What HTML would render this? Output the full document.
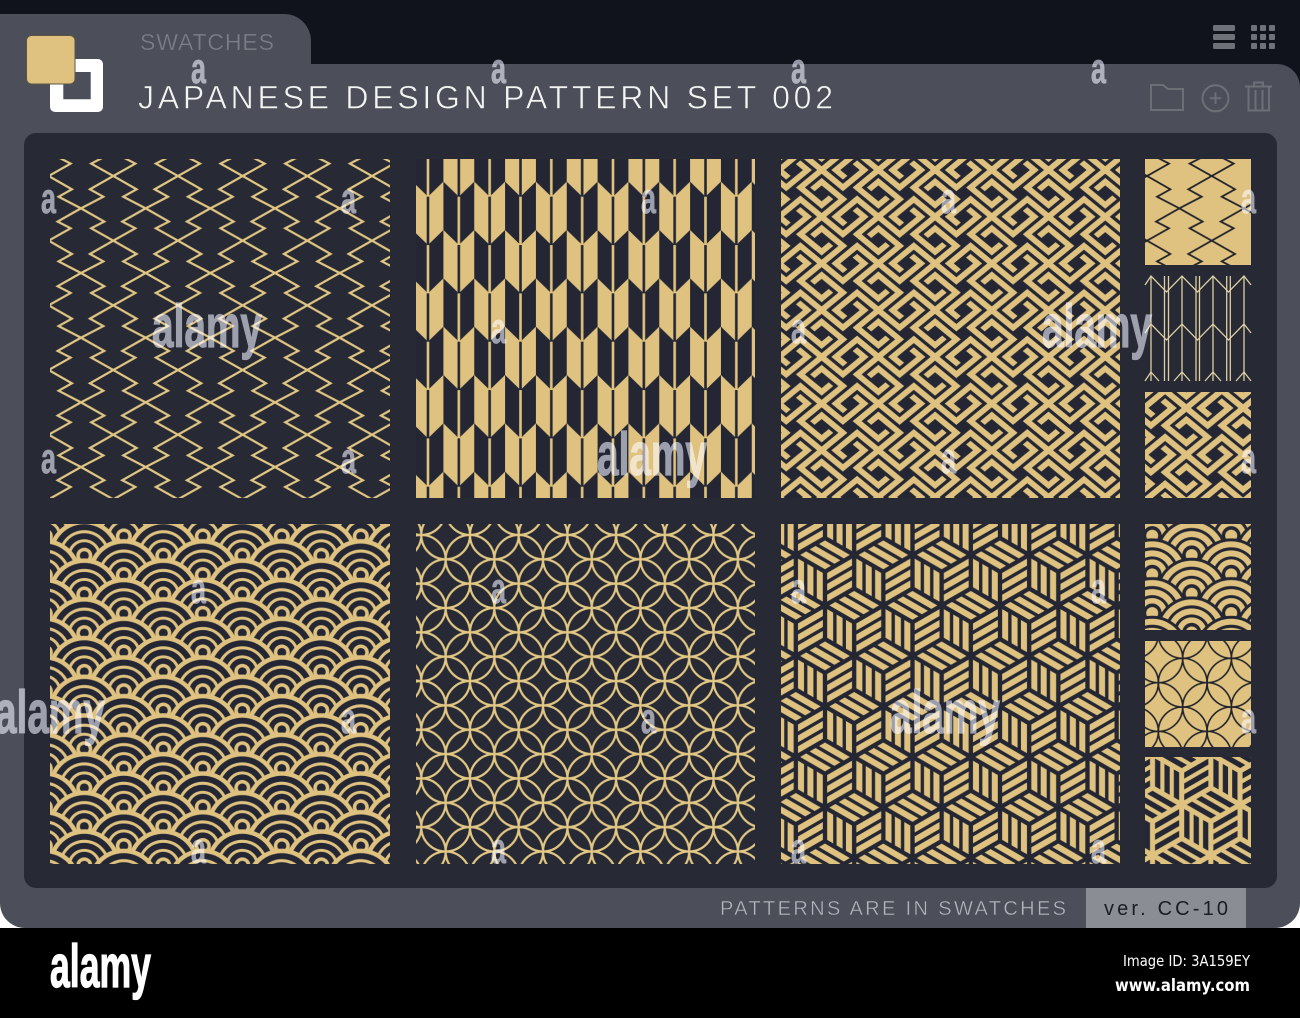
<!DOCTYPE html>
<html><head><meta charset="utf-8"><title>Japanese Design Pattern Set 002</title>
<style>
html,body{margin:0;padding:0;background:#000;width:1300px;height:1018px;overflow:hidden}
svg{display:block}
text{font-family:"Liberation Sans",sans-serif}
.wm{fill:#8c8e98;stroke:#8c8e98;stroke-width:.7;mix-blend-mode:screen;font-weight:bold}
</style></head><body>
<svg xmlns="http://www.w3.org/2000/svg" width="1300" height="1018" viewBox="0 0 1300 1018">
<defs>
<path id="zz" fill="none" stroke-linejoin="miter" d="M0 0L23.3 13.3L10 20.7L32.33 32.33M64.67 0L41.3 13.3L54.67 20.7L32.33 32.33L55.6 45.6L42.6 52.3L64.67 64.67M32.33 32.33L9 45.6L22 52.3L0 64.67"/>
<pattern id="p1" patternUnits="userSpaceOnUse" width="64.67" height="64.67" patternTransform="translate(113.3 176)">
<use href="#zz" stroke="#e2c784" stroke-width="2.2"/></pattern>
<pattern id="s1" patternUnits="userSpaceOnUse" width="64.67" height="64.67" patternTransform="translate(1211.7 176)">
<rect width="65" height="65" fill="#dfc27f"/><use href="#zz" stroke="#20222b" stroke-width="1.8"/></pattern>

<pattern id="p2" patternUnits="userSpaceOnUse" width="61.67" height="96.67" patternTransform="translate(412.58 181.67)">
<rect width="62" height="97" fill="#242733"/>
<g fill="#dfc27f">
<polygon points="0,0 15.42,15 30.83,0 30.83,48.33 15.42,63.33 0,48.33"/>
<polygon points="30.83,48.33 46.25,63.33 61.67,48.33 61.67,96.67 46.25,111.67 30.83,96.67"/>
<polygon points="30.83,-48.33 46.25,-33.33 61.67,-48.33 61.67,0 46.25,15 30.83,0"/>
<rect x="14.1" y="63.33" width="2.6" height="33.4"/><rect x="14.1" y="0" width="2.6" height="15"/>
<rect x="44.95" y="15" width="2.6" height="48.33"/>
</g>
<g fill="#242733">
<rect x="14.1" y="15" width="2.6" height="48.33"/>
<rect x="44.95" y="63.33" width="2.6" height="33.4"/><rect x="44.95" y="0" width="2.6" height="15"/>
</g>
</pattern>

<path id="arm" fill="none" stroke-linecap="square" stroke-linejoin="miter" d="M0 0H3V3H2"/>
<g id="sw"><use href="#arm"/><use href="#arm" transform="rotate(90)"/><use href="#arm" transform="rotate(180)"/><use href="#arm" transform="rotate(270)"/></g>
<g id="swt" transform="matrix(7.09 5.84 7.09 -5.84 0 0)">
<use href="#sw" x="0" y="0"/><use href="#sw" x="4" y="4"/><use href="#sw" x="4" y="-4"/><use href="#sw" x="8" y="0"/>
</g>
<pattern id="p3" patternUnits="userSpaceOnUse" width="56.72" height="46.72" patternTransform="translate(821.65 170)">
<rect width="57" height="47" fill="#242733"/>
<use href="#swt" stroke="#dfc27f" stroke-width=".63"/></pattern>
<pattern id="s3" patternUnits="userSpaceOnUse" width="56.72" height="46.72" patternTransform="translate(1129.65 408)">
<rect width="57" height="47" fill="#242733"/>
<use href="#swt" stroke="#dfc27f" stroke-width=".65"/></pattern>

<g id="fanA"><circle r="36" fill="#dfc27f"/><circle r="31.5" fill="#242733"/><circle r="25.5" fill="#dfc27f"/><circle r="22.5" fill="#242733"/><circle r="16.5" fill="#dfc27f"/><circle r="13.5" fill="#242733"/><circle r="8" fill="#dfc27f"/><circle r="4.5" fill="#242733"/></g>
<g id="fanB"><circle r="36" fill="#242733"/><circle r="33" fill="#dfc27f"/><circle r="27" fill="#242733"/><circle r="24" fill="#dfc27f"/><circle r="18" fill="#242733"/><circle r="15" fill="#dfc27f"/><circle r="9.5" fill="#242733"/><circle r="6" fill="#dfc27f"/></g>
<pattern id="p4" patternUnits="userSpaceOnUse" width="79" height="38.7" patternTransform="translate(5.3 517)">
<rect width="79" height="39" fill="#dfc27f"/>
<use href="#fanA" x="0" y="-38.7"/><use href="#fanA" x="79" y="-38.7"/>
<use href="#fanA" x="39.5" y="-19.35"/>
<use href="#fanA" x="0" y="0"/><use href="#fanA" x="79" y="0"/>
<use href="#fanA" x="39.5" y="19.35"/>
<use href="#fanA" x="0" y="38.7"/><use href="#fanA" x="79" y="38.7"/>
<use href="#fanA" x="39.5" y="58.05"/>
</pattern>
<pattern id="s4" patternUnits="userSpaceOnUse" width="79" height="38.7" patternTransform="translate(1191.7 555)">
<rect width="79" height="39" fill="#242733"/>
<use href="#fanB" x="0" y="-38.7"/><use href="#fanB" x="79" y="-38.7"/>
<use href="#fanB" x="39.5" y="-19.35"/>
<use href="#fanB" x="0" y="0"/><use href="#fanB" x="79" y="0"/>
<use href="#fanB" x="39.5" y="19.35"/>
<use href="#fanB" x="0" y="38.7"/><use href="#fanB" x="79" y="38.7"/>
<use href="#fanB" x="39.5" y="58.05"/>
</pattern>

<g id="shp" fill="none"><circle cx="0" cy="0" r="24.35"/><circle cx="48.7" cy="0" r="24.35"/><circle cx="0" cy="48.7" r="24.35"/><circle cx="48.7" cy="48.7" r="24.35"/><circle cx="24.35" cy="24.35" r="24.35"/></g>
<pattern id="p5" patternUnits="userSpaceOnUse" width="48.7" height="48.7" patternTransform="translate(470 559.3)">
<use href="#shp" stroke="#e2c784" stroke-width="2.2"/></pattern>
<pattern id="s5" patternUnits="userSpaceOnUse" width="48.7" height="48.7" patternTransform="translate(1182.7 682.7)">
<rect width="49" height="49" fill="#dfc27f"/><use href="#shp" stroke="#20222b" stroke-width="1.6"/></pattern>

<g id="rh"><polygon points="-27,-13.08 -21,-9.62 -21,19.06 -27,15.6"/><polygon points="-17.6,-7.66 -11.6,-4.19 -11.6,24.49 -17.6,21.02"/><polygon points="-8.2,-2.23 -2.2,1.23 -2.2,29.91 -8.2,26.45"/></g>
<g id="cube"><use href="#rh"/><use href="#rh" transform="rotate(120)"/><use href="#rh" transform="rotate(240)"/></g>
<g id="cubes"><use href="#cube" x="0" y="0"/><use href="#cube" x="58.33" y="0"/><use href="#cube" x="29.17" y="50.52"/><use href="#cube" x="0" y="101.04"/><use href="#cube" x="58.33" y="101.04"/></g>
<pattern id="p6" patternUnits="userSpaceOnUse" width="58.33" height="101.04" patternTransform="translate(825 571.7)">
<rect width="59" height="102" fill="#242733"/><use href="#cubes" fill="#dfc27f"/></pattern>
<pattern id="s6" patternUnits="userSpaceOnUse" width="58.33" height="101.04" patternTransform="translate(1181.7 771)">
<rect width="59" height="102" fill="#dfc27f"/><use href="#cubes" fill="#242733" stroke="#dfc27f" stroke-width=".7"/></pattern>
</defs>

<rect width="1300" height="1018" fill="#000"/>
<rect width="1300" height="100" fill="#10131c"/>
<rect y="880" width="1300" height="48" fill="#fff"/>
<path d="M0 14H284A27 27 0 0 1 311 41V64H1277A23 23 0 0 1 1300 87V903A25 25 0 0 1 1275 928H25A25 25 0 0 1 0 903Z" fill="#4c4f59"/>
<rect x="24" y="133" width="1253" height="755" rx="12" fill="#272a34"/>

<!-- logo -->
<path fill-rule="evenodd" d="M55 59H98A5 5 0 0 1 103 64V107A5 5 0 0 1 98 112H55A5 5 0 0 1 50 107V64A5 5 0 0 1 55 59ZM63.3 72V99.3H90.7V72Z" fill="#fff"/>
<rect x="26.5" y="35.5" width="48.5" height="48.5" rx="5" fill="#dfc27f" stroke="#5b5445" stroke-width="1"/>

<text x="140" y="50" font-size="23" fill="#7b7e87" textLength="134" lengthAdjust="spacing" stroke="#4c4f59" stroke-width=".35">SWATCHES</text>
<text x="138" y="108.5" font-size="32" fill="#f4f4f4" textLength="695" lengthAdjust="spacing" stroke="#4c4f59" stroke-width=".6">JAPANESE DESIGN PATTERN SET 002</text>

<!-- top-right icons -->
<g fill="#6f7179">
<rect x="1213" y="25" width="22" height="6" rx="1.5"/><rect x="1213" y="34" width="22" height="6" rx="1.5"/><rect x="1213" y="43" width="22" height="6" rx="1.5"/>
<rect x="1251" y="25" width="6" height="6" rx="1"/><rect x="1260" y="25" width="6" height="6" rx="1"/><rect x="1269" y="25" width="6" height="6" rx="1"/>
<rect x="1251" y="34" width="6" height="6" rx="1"/><rect x="1260" y="34" width="6" height="6" rx="1"/><rect x="1269" y="34" width="6" height="6" rx="1"/>
<rect x="1251" y="43" width="6" height="6" rx="1"/><rect x="1260" y="43" width="6" height="6" rx="1"/><rect x="1269" y="43" width="6" height="6" rx="1"/>
</g>
<g fill="none" stroke="#6d6f77" stroke-width="2">
<path d="M1151 85H1163L1168 89H1183V110H1151Z"/>
<circle cx="1215.5" cy="98.3" r="13"/><path d="M1215.5 92.5V104M1209.8 98.3H1221.2"/>
<path d="M1245 86.5H1272M1254 86V82.5H1263V86M1248.5 87V110.5H1269V87M1255.5 90V110M1262.5 90V110"/>
</g>

<!-- patterns -->
<rect x="50" y="159" width="340" height="339" fill="url(#p1)"/>
<rect x="416" y="159" width="339" height="339" fill="url(#p2)"/>
<rect x="781" y="159" width="339" height="339" fill="url(#p3)"/>
<rect x="50" y="524" width="340" height="340" fill="url(#p4)"/>
<rect x="416" y="524" width="339" height="340" fill="url(#p5)"/>
<rect x="781" y="524" width="339" height="340" fill="url(#p6)"/>
<rect x="1145" y="159" width="106" height="106" fill="url(#s1)"/>
<rect x="1145" y="392" width="106" height="106" fill="url(#s3)"/>
<rect x="1145" y="524" width="106" height="106" fill="url(#s4)"/>
<rect x="1145" y="641" width="106" height="106" fill="url(#s5)"/>
<rect x="1145" y="757" width="106" height="107" fill="url(#s6)"/>

<!-- arrow outline swatch -->
<g fill="none" stroke="#dccfa4" stroke-width="1.3">
<path d="M1145 285L1151 276L1166.5 292L1182 276L1197.5 292L1213 276L1228.5 292L1244 276L1251 285"/>
<path d="M1145 333L1151 324L1166.5 340L1182 324L1197.5 340L1213 324L1228.5 340L1244 324L1251 333"/>
<path d="M1145 381L1151 372L1159 381M1174 381L1182 372L1190 381M1205 381L1213 372L1221 381M1236 381L1244 372L1251 381"/>
<path d="M1151 276V381M1182 276V381M1213 276V381M1244 276V381M1164.5 276V381M1168.5 276V381M1196 276V381M1199.5 276V381M1226.7 276V381M1230.3 276V381"/>
</g>

<!-- bottom bar -->
<rect x="1086" y="888" width="160" height="40" fill="#8b8d94"/>
<text x="720" y="915" font-size="20" fill="#b4b6bc" textLength="346" lengthAdjust="spacing" stroke="#4c4f59" stroke-width=".4">PATTERNS ARE IN SWATCHES</text>
<text x="1104" y="915" font-size="20" fill="#1b1d24" textLength="124" lengthAdjust="spacing">ver. CC-10</text>

<!-- watermarks -->
<g font-size="43">
<text class="wm" x="191" y="83" textLength="15" lengthAdjust="spacingAndGlyphs">a</text>
<text class="wm" x="491" y="83" textLength="15" lengthAdjust="spacingAndGlyphs">a</text>
<text class="wm" x="791" y="83" textLength="15" lengthAdjust="spacingAndGlyphs">a</text>
<text class="wm" x="1091" y="83" textLength="15" lengthAdjust="spacingAndGlyphs">a</text>
<text class="wm" x="41" y="213" textLength="15" lengthAdjust="spacingAndGlyphs">a</text>
<text class="wm" x="341" y="213" textLength="15" lengthAdjust="spacingAndGlyphs">a</text>
<text class="wm" x="641" y="213" textLength="15" lengthAdjust="spacingAndGlyphs">a</text>
<text class="wm" x="941" y="213" textLength="15" lengthAdjust="spacingAndGlyphs">a</text>
<text class="wm" x="1241" y="213" textLength="15" lengthAdjust="spacingAndGlyphs">a</text>
<text class="wm" x="491" y="343" textLength="15" lengthAdjust="spacingAndGlyphs">a</text>
<text class="wm" x="791" y="343" textLength="15" lengthAdjust="spacingAndGlyphs">a</text>
<text class="wm" x="41" y="473" textLength="15" lengthAdjust="spacingAndGlyphs">a</text>
<text class="wm" x="341" y="473" textLength="15" lengthAdjust="spacingAndGlyphs">a</text>
<text class="wm" x="941" y="473" textLength="15" lengthAdjust="spacingAndGlyphs">a</text>
<text class="wm" x="1241" y="473" textLength="15" lengthAdjust="spacingAndGlyphs">a</text>
<text class="wm" x="191" y="603" textLength="15" lengthAdjust="spacingAndGlyphs">a</text>
<text class="wm" x="491" y="603" textLength="15" lengthAdjust="spacingAndGlyphs">a</text>
<text class="wm" x="791" y="603" textLength="15" lengthAdjust="spacingAndGlyphs">a</text>
<text class="wm" x="1091" y="603" textLength="15" lengthAdjust="spacingAndGlyphs">a</text>
<text class="wm" x="341" y="733" textLength="15" lengthAdjust="spacingAndGlyphs">a</text>
<text class="wm" x="641" y="733" textLength="15" lengthAdjust="spacingAndGlyphs">a</text>
<text class="wm" x="1241" y="733" textLength="15" lengthAdjust="spacingAndGlyphs">a</text>
<text class="wm" x="191" y="863" textLength="15" lengthAdjust="spacingAndGlyphs">a</text>
<text class="wm" x="491" y="863" textLength="15" lengthAdjust="spacingAndGlyphs">a</text>
<text class="wm" x="791" y="863" textLength="15" lengthAdjust="spacingAndGlyphs">a</text>
<text class="wm" x="1091" y="863" textLength="15" lengthAdjust="spacingAndGlyphs">a</text>
</g>
<g font-size="60">
<text class="wm" style="stroke-width:1.2" x="152" y="347" textLength="110" lengthAdjust="spacingAndGlyphs">alamy</text>
<text class="wm" style="stroke-width:1.2" x="1042" y="347" textLength="110" lengthAdjust="spacingAndGlyphs">alamy</text>
<text class="wm" style="stroke-width:1.2" x="597" y="475" textLength="110" lengthAdjust="spacingAndGlyphs">alamy</text>
<text class="wm" style="stroke-width:1.2" x="-5" y="733" textLength="110" lengthAdjust="spacingAndGlyphs">alamy</text>
<text class="wm" style="stroke-width:1.2" x="890" y="733" textLength="110" lengthAdjust="spacingAndGlyphs">alamy</text>
</g>

<!-- footer -->
<text x="50" y="987" font-size="60" font-weight="bold" fill="#fff" stroke="#fff" stroke-width="1.3" textLength="101" lengthAdjust="spacingAndGlyphs">alamy</text>
<text x="1123" y="966" style="font-family:'DejaVu Sans',sans-serif" font-size="15" fill="#fff" textLength="127" lengthAdjust="spacingAndGlyphs">Image ID: 3A159EY</text>
<text x="1115" y="991" style="font-family:'DejaVu Sans',sans-serif" font-size="17" font-weight="bold" fill="#fff" textLength="135" lengthAdjust="spacingAndGlyphs">www.alamy.com</text>
</svg>
</body></html>
